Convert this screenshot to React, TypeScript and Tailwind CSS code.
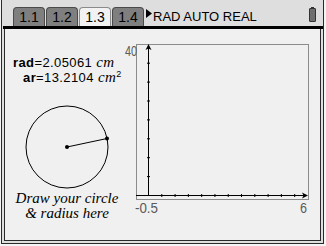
import React from 'react';

const tabs = ['1.1', '1.2', '1.3', '1.4'];

const Tab: React.FC<{ label: string; active?: boolean }> = ({ label, active }) => (
  <div
    className={
      active
        ? 'w-[32px] h-[19px] rounded-t-[4px] border border-b-0 border-[#8a8a8a] bg-[#f2f2f2] flex items-center justify-center text-[14px] leading-none text-black'
        : 'w-[32px] h-[19px] rounded-t-[4px] border border-b-0 border-[#4a4a4a] bg-[#7f7f7f] flex items-center justify-center text-[14px] leading-none text-black'
    }
  >
    {label}
  </div>
);

// axis geometry, in graph svg coords (origin at page x=122, y=29)
const yZero = 166.5;
const xZero = 26.5;
const yStep = 18.9;
const xStep = 13.29;

const Graph: React.FC = () => (
  <svg width="198" height="210" className="block">
    <rect x="14.5" y="15.5" width="172" height="155" fill="none" stroke="#8c8c8c" strokeWidth="1" />
    {/* y axis */}
    <line x1={xZero} y1="18" x2={xZero} y2={yZero} stroke="#000" strokeWidth="1" />
    <polygon points={`${xZero},15 ${xZero - 3},21 ${xZero},19.5 ${xZero + 3},21`} fill="#000" />
    {[1, 2, 3, 4, 5, 6, 7].map((k) => (
      <line
        key={`y${k}`}
        x1={xZero - 1.5}
        y1={yZero - yStep * k}
        x2={xZero + 1.5}
        y2={yZero - yStep * k}
        stroke="#000"
        strokeWidth="1"
      />
    ))}
    {/* x axis */}
    <line x1="14" y1={yZero} x2="183" y2={yZero} stroke="#000" strokeWidth="1" />
    <polygon points={`186,${yZero} 180,${yZero - 3} 181.5,${yZero} 180,${yZero + 3}`} fill="#000" />
    {[1, 2, 3, 4, 5, 6, 7, 8, 9, 10, 11].map((k) => (
      <line
        key={`x${k}`}
        x1={xZero + xStep * k}
        y1={yZero - 1.5}
        x2={xZero + xStep * k}
        y2={yZero + 1.5}
        stroke="#000"
        strokeWidth="1"
      />
    ))}
    <text x="3" y="27" fontSize="14" fill="#5a5a5a" fontFamily="'Liberation Sans', Arial, sans-serif" textLength="12" lengthAdjust="spacingAndGlyphs">
      40
    </text>
    <text x="13" y="184" fontSize="14" fill="#5a5a5a" fontFamily="'Liberation Sans', Arial, sans-serif" textLength="23" lengthAdjust="spacingAndGlyphs">
      -0.5
    </text>
    <text x="178" y="184" fontSize="14" fill="#5a5a5a" fontFamily="'Liberation Sans', Arial, sans-serif" textLength="7" lengthAdjust="spacingAndGlyphs">
      6
    </text>
  </svg>
);

export default function App() {
  return (
    <div className="w-[326px] h-[246px] bg-[#f4f4f4] overflow-hidden font-['Liberation_Sans',Arial,sans-serif]">
      <div className="ml-[1px] w-[323px] h-[244px] border-x border-b border-[#2a2a2a] bg-[#dedede] flex flex-col">
        {/* header */}
        <div className="h-[26px] flex items-end pl-[11px]">
          <div className="flex gap-[1px]">
            {tabs.map((t) => (
              <Tab key={t} label={t} active={t === '1.3'} />
            ))}
          </div>
          <svg width="6" height="9" className="self-start mt-[9px] ml-[2px]">
            <polygon points="0,0 6,4.5 0,9" fill="#000" />
          </svg>
          <div className="self-start mt-[10px] ml-[1px] text-[13px] leading-[13px] text-black whitespace-nowrap">
            RAD AUTO REAL
          </div>
          <div className="flex-1" />
          <div className="self-start mt-[7px] mr-[7px] flex flex-col items-center">
            <div className="w-[3px] h-[1px] bg-[#333]" />
            <div className="w-[7px] h-[14px] border border-[#333] bg-[#6e6e6e] rounded-[1px]" />
          </div>
        </div>
        <div className="h-[3px] ml-[1px] bg-black" />
        {/* page body */}
        <div className="flex-1 mx-[2px] mb-[2px] border-x border-b border-[#2a2a2a] bg-[#f0f0f0] flex">
          <div className="w-[117px] flex flex-col pt-[26px]">
            <div className="pl-[8px] text-[13px] leading-[14px] tracking-[0.4px] text-black whitespace-nowrap">
              <span className="font-bold">rad</span>=2.05061{' '}
              <span className="font-['Liberation_Serif',serif] italic text-[15px] leading-none">cm</span>
            </div>
            <div className="pl-[18px] text-[13px] leading-[14px] tracking-[0.4px] text-black whitespace-nowrap">
              <span className="font-bold">ar</span>=13.2104{' '}
              <span className="font-['Liberation_Serif',serif] italic text-[15px] leading-none">cm</span>
              <span className="text-[9px] leading-none align-top">2</span>
            </div>
            <svg width="117" height="89" className="block mt-[17px]">
              <circle cx="62" cy="45" r="41" fill="none" stroke="#000" strokeWidth="1" />
              <line x1="62" y1="45" x2="102" y2="36.5" stroke="#000" strokeWidth="1" />
              <circle cx="62" cy="45" r="2" fill="#000" />
              <circle cx="102" cy="36.5" r="2" fill="#000" />
            </svg>
            <div className="pl-[7px] text-center font-['Liberation_Serif',serif] italic text-[15px] leading-[15px] text-black">
              <div>Draw your circle</div>
              <div>&amp; radius here</div>
            </div>
          </div>
          <Graph />
        </div>
      </div>
    </div>
  );
}
